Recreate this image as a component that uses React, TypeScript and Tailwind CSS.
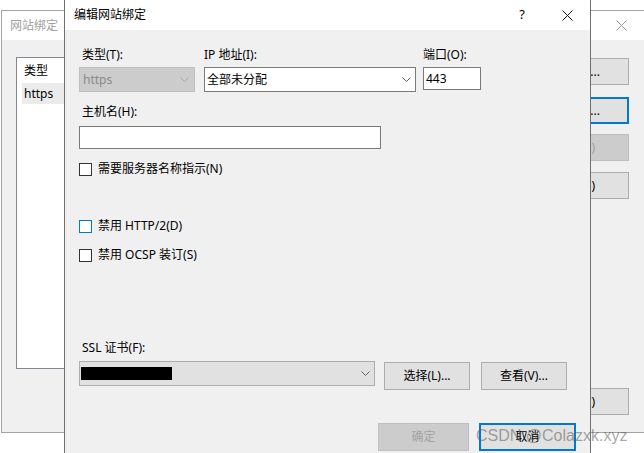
import React from 'react'

const Chevron: React.FC<{ color?: string }> = ({ color = '#606060' }) => (
  <svg width="9" height="5" viewBox="0 0 9 5" className="shrink-0">
    <polyline points="0.5,0.5 4.5,4.5 8.5,0.5" fill="none" stroke={color} strokeWidth="1" />
  </svg>
)

const CloseX: React.FC<{ color: string }> = ({ color }) => (
  <svg width="11" height="11" viewBox="0 0 11 11">
    <path d="M0.5 0.5 L10.5 10.5 M10.5 0.5 L0.5 10.5" stroke={color} strokeWidth="1" fill="none" />
  </svg>
)

const Checkbox: React.FC<{ label: string; hover?: boolean; className?: string }> = ({
  label,
  hover,
  className = '',
}) => (
  <div className={`flex items-center h-[16px] ${className}`}>
    <div
      className={`w-[13px] h-[13px] bg-white border ${hover ? 'border-[#0078d7]' : 'border-[#333333]'}`}
    />
    <span className="ml-[6px] leading-[16px]">{label}</span>
  </div>
)

const BgButton: React.FC<{ text: string; pr: string; variant?: 'focus' | 'disabled' }> = ({
  text,
  pr,
  variant,
}) => {
  const look =
    variant === 'focus'
      ? 'border-2 border-[#0078d7] bg-[#e1e1e1] text-black'
      : variant === 'disabled'
        ? 'border border-[#bfbfbf] bg-[#cccccc] text-[#a0a0a0]'
        : 'border border-[#adadad] bg-[#e1e1e1] text-black'
  return (
    <div className={`h-[27px] w-[85px] flex items-center justify-end whitespace-nowrap ${pr} ${look}`}>
      {text}
    </div>
  )
}

const App: React.FC = () => {
  return (
    <div className="relative w-[644px] h-[453px] overflow-hidden bg-white text-[12px] text-black font-['Noto_Sans','Noto_Sans_CJK_SC',sans-serif]">
      {/* 网站绑定 (background window) */}
      <div className="absolute left-[1px] top-[10px] w-[644px] h-[423px] border border-[#a3a3a3] flex flex-col bg-[#f0f0f0]">
        <div className="h-[29px] shrink-0 bg-white flex items-center justify-between">
          <span className="pl-[8px] text-[#a0a0a0]">网站绑定</span>
          <div className="w-[46px] h-full flex items-center justify-center">
            <CloseX color="#9a9a9a" />
          </div>
        </div>
        <div className="flex-1 flex items-start pl-[14px] pr-[15px] pt-[17px]">
          <div className="flex-1 h-[312px] mr-[10px] bg-white border border-[#828790]">
            <div className="h-[25px] flex items-center pl-[7px]">类型</div>
            <div className="ml-[5px] h-[21px] bg-[#ebebeb] flex items-center pl-[2px]">https</div>
          </div>
          <div className="w-[85px] h-[357px] mt-[1px] flex flex-col justify-between">
            <div className="flex flex-col">
              <BgButton text="添加(A)..." pr="pr-[28px]" />
              <div className="mt-[12px]">
                <BgButton text="编辑(E)..." pr="pr-[27px]" variant="focus" />
              </div>
              <div className="mt-[10px]">
                <BgButton text="删除(R)" pr="pr-[33px]" variant="disabled" />
              </div>
              <div className="mt-[11px]">
                <BgButton text="浏览(B)" pr="pr-[33px]" />
              </div>
            </div>
            <BgButton text="关闭(C)" pr="pr-[33px]" />
          </div>
        </div>
      </div>

      {/* 编辑网站绑定 (dialog) */}
      <div className="absolute left-[64px] top-[-1px] w-[527px] h-[460px] border border-[#6f6f6f] bg-[#f0f0f0] flex flex-col">
        <div className="h-[30px] shrink-0 bg-white flex items-center">
          <span className="flex-1 pl-[9px]">编辑网站绑定</span>
          <div className="w-[44px] h-full flex items-center justify-center text-[13px]">?</div>
          <div className="w-[46px] h-full flex items-center justify-center">
            <CloseX color="#111111" />
          </div>
        </div>

        <div className="flex flex-col pt-[17px] px-[14px]">
          <div className="flex items-start">
            <div className="w-[116px] flex flex-col">
              <span className="h-[16px] leading-[16px] pl-[3px] mb-[4px]">类型(T):</span>
              <div className="h-[25px] bg-[#cccccc] border border-[#bfbfbf] flex items-center justify-between pl-[3px] pr-[5px] text-[#8a8a8a]">
                https
                <Chevron color="#a8a8a8" />
              </div>
            </div>
            <div className="w-[212px] ml-[9px] flex flex-col">
              <span className="h-[16px] leading-[16px] mb-[4px]">IP 地址(I):</span>
              <div className="h-[25px] bg-white border border-[#7a7a7a] flex items-center justify-between pl-[2px] pr-[4px]">
                全部未分配
                <Chevron />
              </div>
            </div>
            <div className="w-[58px] ml-[7px] flex flex-col">
              <span className="h-[16px] leading-[16px] mb-[4px]">端口(O):</span>
              <div className="h-[23px] bg-white border border-[#7a7a7a] flex items-center pl-[2px]">443</div>
            </div>
          </div>

          <span className="mt-[12px] h-[16px] leading-[16px] pl-[3px] mb-[6px]">主机名(H):</span>
          <div className="w-[302px] h-[23px] bg-white border border-[#7a7a7a]" />

          <Checkbox className="mt-[12px]" label="需要服务器名称指示(N)" />
          <Checkbox className="mt-[41px]" label="禁用 HTTP/2(D)" hover />
          <Checkbox className="mt-[13px]" label="禁用 OCSP 装订(S)" />

          <span className="mt-[77px] h-[16px] leading-[16px] pl-[3px] mb-[5px]">SSL 证书(F):</span>
          <div className="flex items-start">
            <div className="w-[296px] h-[25px] bg-[#e1e1e1] border border-[#adadad] flex items-center justify-between pl-[1px] pr-[4px]">
              <div className="w-[91px] h-[13px] bg-black" />
              <Chevron />
            </div>
            <div className="ml-[9px] mt-[1px] w-[86px] h-[28px] bg-[#e1e1e1] border border-[#adadad] flex items-center justify-center">
              选择(L)...
            </div>
            <div className="ml-[11px] mt-[1px] w-[86px] h-[28px] bg-[#e1e1e1] border border-[#adadad] flex items-center justify-center">
              查看(V)...
            </div>
          </div>

          <div className="mt-[33px] flex justify-end">
            <div className="w-[91px] h-[28px] bg-[#cccccc] border border-[#bfbfbf] flex items-center justify-center text-[#a3a3a3]">
              确定
            </div>
            <div className="ml-[10px] w-[97px] h-[28px] bg-[#e1e1e1] border-2 border-[#0078d7] flex items-center justify-center">
              取消
            </div>
          </div>
        </div>
      </div>

      {/* watermark */}
      <span className="absolute left-[476px] top-[428px] text-[16px] leading-[16px] whitespace-nowrap font-['Liberation_Sans',Arial,sans-serif] text-[rgba(90,90,90,0.55)]">
        CSDN @Colazxk.xyz
      </span>
    </div>
  )
}

export default App
